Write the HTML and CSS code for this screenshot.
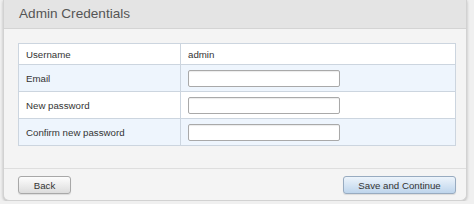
FILE: index.html
```html
<!DOCTYPE html>
<html lang="en">
<head>
<meta charset="UTF-8">
<meta name="viewport" content="width=device-width, initial-scale=1.0">
<title>Admin Credentials</title>
<link rel="stylesheet" href="styles.css">
</head>
<body>

<div class="panel">
  <div class="panel-header">Admin Credentials</div>
  <div class="panel-body">
    <table class="form-table">
      <tr class="row-first">
        <td class="label">Username</td>
        <td class="value">admin</td>
      </tr>
      <tr class="alt">
        <td class="label">Email</td>
        <td class="value"><input type="text" class="field"></td>
      </tr>
      <tr>
        <td class="label">New password</td>
        <td class="value"><input type="password" class="field"></td>
      </tr>
      <tr class="alt">
        <td class="label">Confirm new password</td>
        <td class="value"><input type="password" class="field"></td>
      </tr>
    </table>
  </div>
  <div class="panel-footer">
    <button class="btn">Back</button>
    <button class="btn btn-primary">Save and Continue</button>
  </div>
</div>

</body>
</html>
```

FILE: styles.css
```css
body {
  margin: 0;
  padding: 0 7px 0 3px;
  font-family: 'Liberation Sans', Arial, sans-serif;
  background: #f0f0f0;
  color: #333;
}
.panel {
  background: #f4f4f4;
  border: 1px solid #d2d2d2;
  border-top: none;
  border-radius: 0 0 6px 6px;
  box-shadow: 0 1px 3px rgba(0,0,0,0.25);
}
.panel-header {
  height: 28px;
  line-height: 27px;
  padding-left: 15px;
  background: #e4e4e4;
  border-bottom: 1px solid #d4d4d4;
  font-size: 13.6px;
  color: #555;
}
.panel-body {
  padding: 14px 10px 22px 14px;
  border-bottom: 1px solid #dedede;
}
.form-table {
  width: 100%;
  border-collapse: collapse;
  background: #fff;
  border: 1px solid #ccd5df;
  font-size: 9.7px;
}
.form-table td {
  border-top: 1px solid #ccd5df;
  height: 26px;
  padding: 0 7px;
}
.form-table .row-first td {
  height: 20px;
}
.form-table td.label {
  width: 147px;
  border-right: 1px solid #ccd5df;
}
.form-table tr.alt td {
  background: #eef5fd;
}
.field {
  box-sizing: border-box;
  width: 152px;
  height: 17px;
  margin: 0;
  border: 1px solid #a9a9a9;
  border-radius: 2px;
  background: #fff;
  box-shadow: inset 0 1px 1px rgba(0,0,0,0.08);
  display: block;
}
.panel-footer {
  display: flex;
  justify-content: space-between;
  padding: 7px 10px 6px 14px;
}
.btn {
  box-sizing: border-box;
  height: 18px;
  width: 53px;
  padding: 0;
  font-family: 'Liberation Sans', Arial, sans-serif;
  font-size: 9.7px;
  color: #333;
  border: 1px solid #a8a8a8;
  border-radius: 3px;
  background: linear-gradient(#fdfdfd, #dcdcdc);
  box-shadow: 0 1px 1px rgba(0,0,0,0.1);
}
.btn-primary {
  width: 113px;
  border-color: #98abc0;
  background: linear-gradient(#edf4fb, #bed5ec);
}
```
